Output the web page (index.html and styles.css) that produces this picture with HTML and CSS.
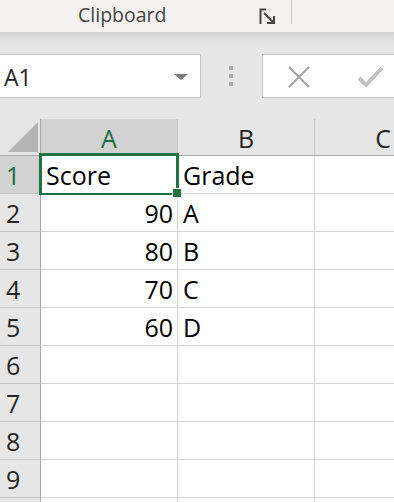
FILE: index.html
```html
<!DOCTYPE html>
<html>
<head>
<meta charset="utf-8">
<link rel="stylesheet" href="styles.css">
</head>
<body>
<div class="app">
  <div class="ribbon">
    <span class="ribbon-label">Clipboard</span>
    <svg class="launcher" width="17" height="17" viewBox="0 0 17 17">
      <path d="M1.5 16 V1.5 H7" fill="none" stroke="#444" stroke-width="2"/>
      <path d="M5 5 L15 15" fill="none" stroke="#444" stroke-width="2"/>
      <path d="M8 15 H15 V8" fill="none" stroke="#444" stroke-width="2"/>
    </svg>
    <span class="ribbon-sep"></span>
  </div>
  <div class="fbar">
    <div class="namebox">
      <span class="nb-text">A1</span>
      <span class="nb-arrow"></span>
    </div>
    <div class="dots"><i></i><i></i><i></i></div>
    <div class="fbox">
      <svg class="ic-x" width="24" height="22" viewBox="0 0 24 22">
        <path d="M2 1 L22 21 M22 1 L2 21" stroke="#a3a3a3" stroke-width="2" fill="none"/>
      </svg>
      <svg class="ic-check" width="28" height="22" viewBox="0 0 28 22">
        <path d="M2 12 L9 19 L25 2" stroke="#c2c2c2" stroke-width="4" fill="none"/>
      </svg>
    </div>
  </div>
  <div class="sheet">
    <div class="grid">
      <div class="corner"><span class="tri"></span></div>
      <div class="ch sel">A</div>
      <div class="ch">B</div>
      <div class="ch">C</div>

      <div class="rh sel">1</div>
      <div class="c">Score</div>
      <div class="c">Grade</div>
      <div class="c"></div>

      <div class="rh">2</div>
      <div class="c num">90</div>
      <div class="c">A</div>
      <div class="c"></div>

      <div class="rh">3</div>
      <div class="c num">80</div>
      <div class="c">B</div>
      <div class="c"></div>

      <div class="rh">4</div>
      <div class="c num">70</div>
      <div class="c">C</div>
      <div class="c"></div>

      <div class="rh">5</div>
      <div class="c num">60</div>
      <div class="c">D</div>
      <div class="c"></div>

      <div class="rh">6</div>
      <div class="c"></div>
      <div class="c"></div>
      <div class="c"></div>

      <div class="rh">7</div>
      <div class="c"></div>
      <div class="c"></div>
      <div class="c"></div>

      <div class="rh">8</div>
      <div class="c"></div>
      <div class="c"></div>
      <div class="c"></div>

      <div class="rh">9</div>
      <div class="c"></div>
      <div class="c"></div>
      <div class="c"></div>

      <div class="rh"></div>
      <div class="c"></div>
      <div class="c"></div>
      <div class="c"></div>
    </div>
    <div class="selection"><span class="handle"></span></div>
  </div>
</div>
</body>
</html>
```

FILE: styles.css
```css
html, body {
  margin: 0;
  padding: 0;
  width: 394px;
  height: 502px;
  overflow: hidden;
  background: #ffffff;
}

.app {
  width: 394px;
  height: 502px;
  overflow: hidden;
  font-family: "Open Sans", "Liberation Sans", sans-serif;
}

.ribbon {
  height: 32px;
  background: #f3f2f1;
  display: flex;
  align-items: flex-start;
  position: relative;
}

.ribbon-label {
  margin-left: 78px;
  margin-top: 2px;
  font-size: 19.5px;
  line-height: 26px;
  color: #444444;
}

.launcher {
  margin-left: 93px;
  margin-top: 8px;
}

.ribbon-sep {
  width: 1px;
  height: 24px;
  background: #c8c6c4;
  margin-left: 15px;
}

.fbar {
  height: 87px;
  box-sizing: border-box;
  background: linear-gradient(to bottom, #d2d2d2 0px, #dedede 6px, #e6e6e6 14px, #e6e6e6 100%);
  padding-top: 22px;
  display: flex;
  align-items: flex-start;
}

.namebox {
  width: 201px;
  height: 44px;
  box-sizing: border-box;
  background: #ffffff;
  border: 1px solid #c6c6c6;
  border-left: none;
  display: flex;
  align-items: center;
  justify-content: space-between;
  padding: 0 12px 0 4px;
}

.nb-text {
  font-size: 23px;
  line-height: 30px;
  color: #262626;
  margin-top: 1px;
}

.nb-arrow {
  width: 0;
  height: 0;
  border-left: 7px solid transparent;
  border-right: 7px solid transparent;
  border-top: 6px solid #7a7a7a;
  margin-top: 1px;
}

.dots {
  width: 4px;
  margin-left: 28px;
  margin-top: 12px;
  display: flex;
  flex-direction: column;
  gap: 4px;
}

.dots i {
  display: block;
  width: 4px;
  height: 4px;
  background: #a9a9a9;
}

.fbox {
  margin-left: 29px;
  flex: 1;
  height: 44px;
  box-sizing: border-box;
  background: #ffffff;
  border: 1px solid #c6c6c6;
  border-right: none;
  display: flex;
  align-items: center;
  padding-left: 24px;
}

.ic-x {
  margin-top: 1px;
}

.ic-check {
  margin-left: 46px;
  margin-top: 1px;
}

.sheet {
  position: relative;
}

.grid {
  display: grid;
  grid-template-columns: 41px 137px 137px 137px;
  grid-template-rows: 37px repeat(10, 38px);
  font-size: 25px;
  color: #000000;
}

.corner {
  background: #e6e6e6;
  border-right: 1px solid #ababab;
  border-bottom: 1px solid #ababab;
  box-sizing: border-box;
  position: relative;
}

.tri {
  position: absolute;
  left: 8px;
  top: 3px;
  width: 0;
  height: 0;
  border-left: 30px solid transparent;
  border-bottom: 30px solid #b4b4b4;
}

.ch {
  background: #e6e6e6;
  border-right: 1px solid #c6c6c6;
  border-bottom: 1px solid #ababab;
  box-sizing: border-box;
  display: flex;
  align-items: center;
  justify-content: center;
  color: #262626;
  line-height: 1;
  padding-top: 2px;
}

.ch.sel {
  background: #d2d2d2;
  color: #1d6b40;
}

.rh {
  background: #e6e6e6;
  border-right: 1px solid #a6a6a6;
  border-bottom: 1px solid #c6c6c6;
  box-sizing: border-box;
  display: flex;
  align-items: center;
  padding-left: 6px;
  color: #262626;
  line-height: 1;
  padding-top: 2px;
}

.rh.sel {
  background: #d2d2d2;
  color: #1d6b40;
}

.c {
  border-right: 1px solid #d4d4d4;
  border-bottom: 1px solid #d4d4d4;
  box-sizing: border-box;
  display: flex;
  align-items: center;
  padding: 2px 4px 0 5px;
  line-height: 1;
  white-space: nowrap;
  overflow: hidden;
}

.c.num {
  justify-content: flex-end;
}

.selection {
  position: absolute;
  left: 39px;
  top: 34px;
  width: 140px;
  height: 42px;
  box-sizing: border-box;
  border: 3px solid #217346;
  border-bottom-width: 2px;
}

.handle {
  position: absolute;
  right: -5px;
  bottom: -4px;
  width: 8px;
  height: 8px;
  background: #217346;
  border-left: 1px solid #ffffff;
  border-top: 1px solid #ffffff;
}
```
